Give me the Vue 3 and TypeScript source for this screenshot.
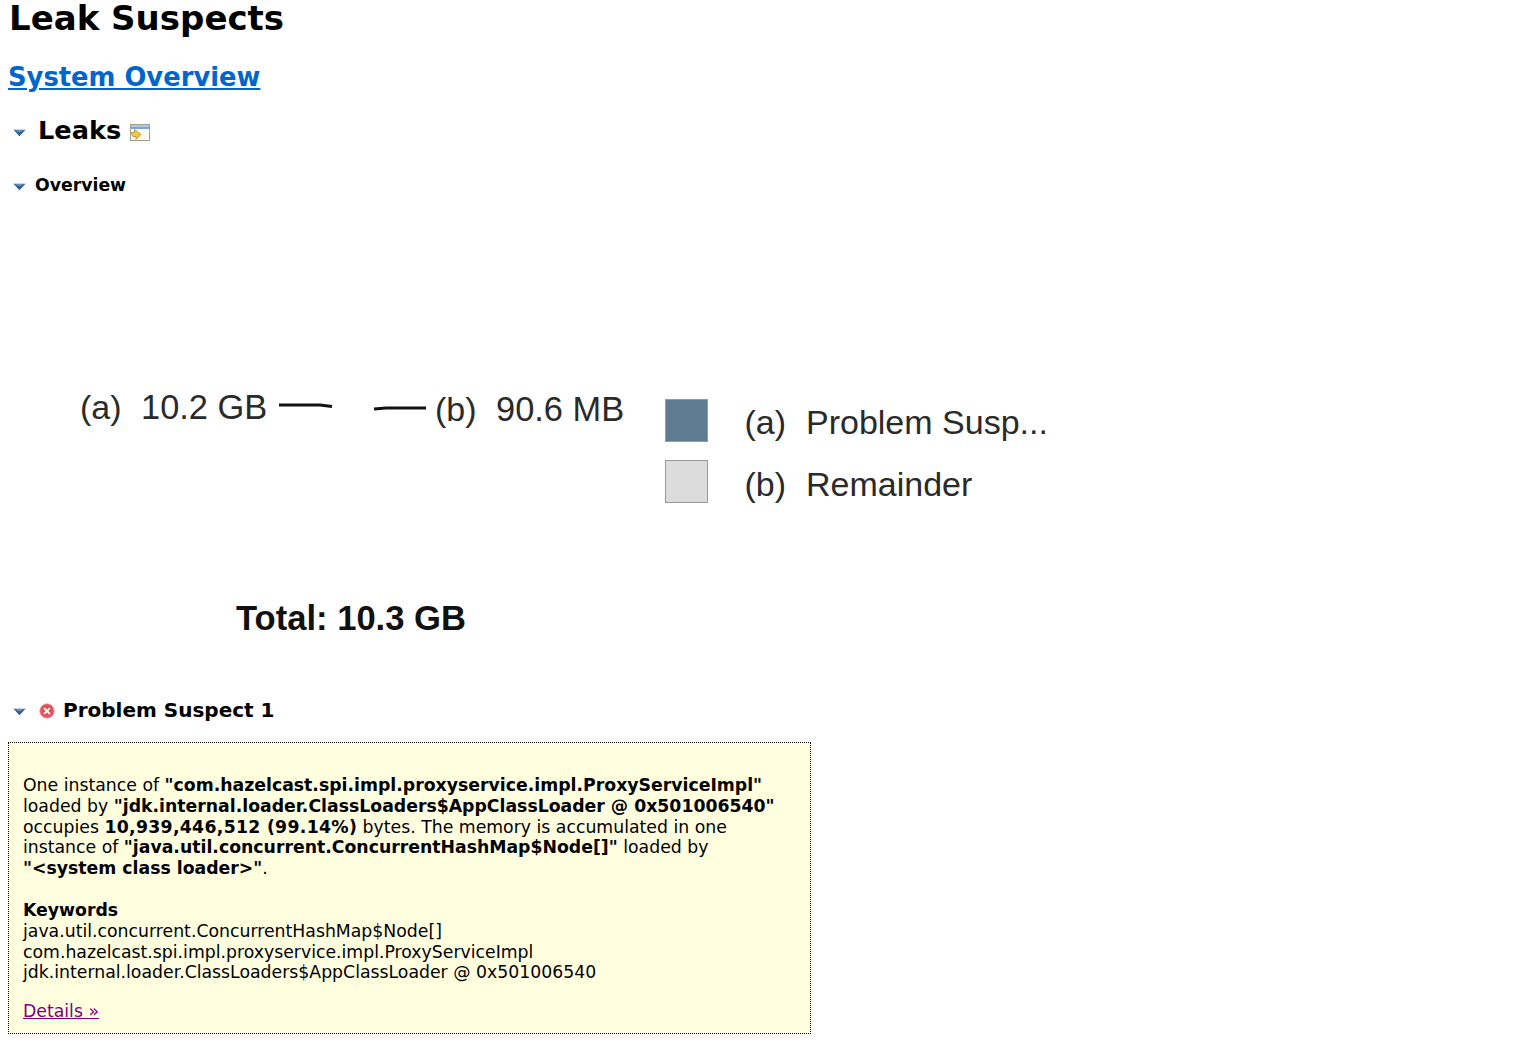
<template>
  <div class="report">
    <h1 class="title">Leak Suspects</h1>
    <h2 class="overview-link"><a href="#">System Overview</a></h2>

    <div class="section leaks">
      <svg class="twisty" viewBox="0 0 14 8"><path d="M0.5 0.5H13.5L7 7.5Z" fill="#2f5f93" /><path d="M2 1H12L7 3.2Z" fill="#7d9dbf" /></svg>
      <span>Leaks</span>
      <svg class="task-icon" viewBox="0 0 20 17">
        <rect x="0.5" y="0.5" width="19" height="16" fill="#fbfbf4" stroke="#a39f8c" />
        <rect x="1" y="1" width="18" height="2" fill="#a9c8ea" />
        <rect x="1" y="3" width="18" height="2" fill="#7da6d6" />
        <path d="M1 8.5h3.5V5.5l6.5 5-5 5v-3H3z" fill="#f2c84b" stroke="#b98a2a" stroke-width="0.8" />
      </svg>
    </div>

    <div class="section sub">
      <svg class="twisty" viewBox="0 0 14 8"><path d="M0.5 0.5H13.5L7 7.5Z" fill="#2f5f93" /><path d="M2 1H12L7 3.2Z" fill="#7d9dbf" /></svg>
      <span>Overview</span>
    </div>

    <svg class="chart" width="1100" height="502" viewBox="0 0 1100 502">
      <g class="label">
        <text x="80" y="223">(a)</text>
        <text class="fit" x="141" y="223">10.2 GB</text>
        <text x="435" y="225">(b)</text>
        <text class="fit" x="496" y="225">90.6 MB</text>
        <text x="744.5" y="238">(a)</text>
        <text x="806" y="238">Problem Susp...</text>
        <text x="744.5" y="300">(b)</text>
        <text x="806" y="300">Remainder</text>
      </g>
      <path d="M279 209H320L332 210.5" fill="none" stroke="#111" stroke-width="3" />
      <path d="M374 213L386 212H426" fill="none" stroke="#111" stroke-width="3" />
      <rect x="665.5" y="203.5" width="42" height="42" fill="#5e7d92" stroke="#999" />
      <rect x="665.5" y="264.5" width="42" height="42" fill="#dcdcdc" stroke="#999" />
      <text class="total" x="236" y="434">Total: 10.3 GB</text>
    </svg>

    <div class="section suspect">
      <svg class="twisty" viewBox="0 0 14 8"><path d="M0.5 0.5H13.5L7 7.5Z" fill="#2f5f93" /><path d="M2 1H12L7 3.2Z" fill="#7d9dbf" /></svg>
      <svg class="error-icon" viewBox="0 0 16 16">
        <defs>
          <radialGradient id="err" cx="50%" cy="40%" r="60%">
            <stop offset="0" stop-color="#e8454c" />
            <stop offset="1" stop-color="#d9606a" />
          </radialGradient>
        </defs>
        <circle cx="8" cy="8" r="7.3" fill="url(#err)" stroke="#f0b0b4" stroke-width="0.8" />
        <path d="M5.2 5.2l5.6 5.6M10.8 5.2l-5.6 5.6" stroke="#fff" stroke-width="1.9" />
      </svg>
      <span>Problem Suspect 1</span>
    </div>

    <div class="note">
      <p class="summary">
        One instance of <b>"com.hazelcast.spi.impl.proxyservice.impl.ProxyServiceImpl"</b>
        loaded by <b>"jdk.internal.loader.ClassLoaders$AppClassLoader @ 0x501006540"</b>
        occupies <b class="num">10,939,446,512 (99.14%)</b> bytes. The memory is accumulated in one
        instance of <b>"java.util.concurrent.ConcurrentHashMap$Node[]"</b> loaded by
        <b class="loader">"&lt;system class loader&gt;"</b>.
      </p>
      <p class="keywords">
        <b>Keywords</b><br />
        <template v-for="k in keywords" :key="k">{{ k }}<br /></template>
      </p>
      <a class="details" href="#">Details »</a>
    </div>
  </div>
</template>

<script setup lang="ts">
const keywords: string[] = [
  "java.util.concurrent.ConcurrentHashMap$Node[]",
  "com.hazelcast.spi.impl.proxyservice.impl.ProxyServiceImpl",
  "jdk.internal.loader.ClassLoaders$AppClassLoader @ 0x501006540",
];
</script>

<style>
html,
body {
  margin: 0;
  background: #fff;
}
</style>

<style scoped>
.report {
  height: 1050px;
  overflow: hidden;
  padding-left: 8px;
  font-family: "DejaVu Sans", Verdana, sans-serif;
  color: #000;
  box-sizing: border-box;
}
.title {
  margin: 0;
  font-size: 34px;
  line-height: 37px;
  font-weight: 700;
  padding-left: 1px;
}
.overview-link {
  margin: 25px 0 0;
  font-size: 25.8px;
  line-height: 30px;
  font-weight: 700;
}
.overview-link a {
  color: #0066cc;
}
.section {
  display: flex;
  align-items: center;
  font-weight: 700;
}
.twisty {
  width: 13px;
  height: 8px;
  margin-left: 5px;
  margin-top: 4px;
  flex-shrink: 0;
}
.leaks {
  margin-top: 23px;
  font-size: 25.6px;
  line-height: 30px;
}
.leaks .twisty {
  margin-top: 6px;
}
.leaks span {
  margin-left: 12px;
}
.task-icon {
  width: 20px;
  height: 17px;
  margin-left: 9px;
  margin-top: 4px;
}
.sub {
  margin-top: 30px;
  font-size: 17.3px;
  line-height: 21px;
}
.sub .twisty {
  margin-top: 2px;
}
.sub span {
  margin-left: 9px;
}
.chart {
  display: block;
  margin: 0 0 0 -8px;
  height: 502px;
}
.label text {
  font-family: "Liberation Sans", Arial, sans-serif;
  font-size: 34px;
  fill: #2a2a2a;
}
.label text.fit {
  font-size: 34.4px;
}
.total {
  font-family: "Liberation Sans", Arial, sans-serif;
  font-size: 34.6px;
  font-weight: 700;
  fill: #111;
}
.suspect {
  font-size: 20px;
  line-height: 24px;
}
.error-icon {
  width: 16px;
  height: 16px;
  margin-left: 13px;
  margin-top: 1px;
}
.suspect span {
  margin-left: 8px;
}
.note {
  margin-top: 20px;
  width: 803px;
  height: 292px;
  box-sizing: border-box;
  border: 1px dotted #000;
  background: #ffffe0;
  padding: 32px 14px 0;
  line-height: 20.8px;
  font-size: 17.3px;
}
.summary,
.keywords {
  margin: 0;
}
.keywords {
  margin-top: 21px;
}
.num {
  letter-spacing: 0.3px;
}
.loader {
  white-space: nowrap;
}
.details {
  display: inline-block;
  margin-top: 18px;
  color: #800080;
}
</style>
